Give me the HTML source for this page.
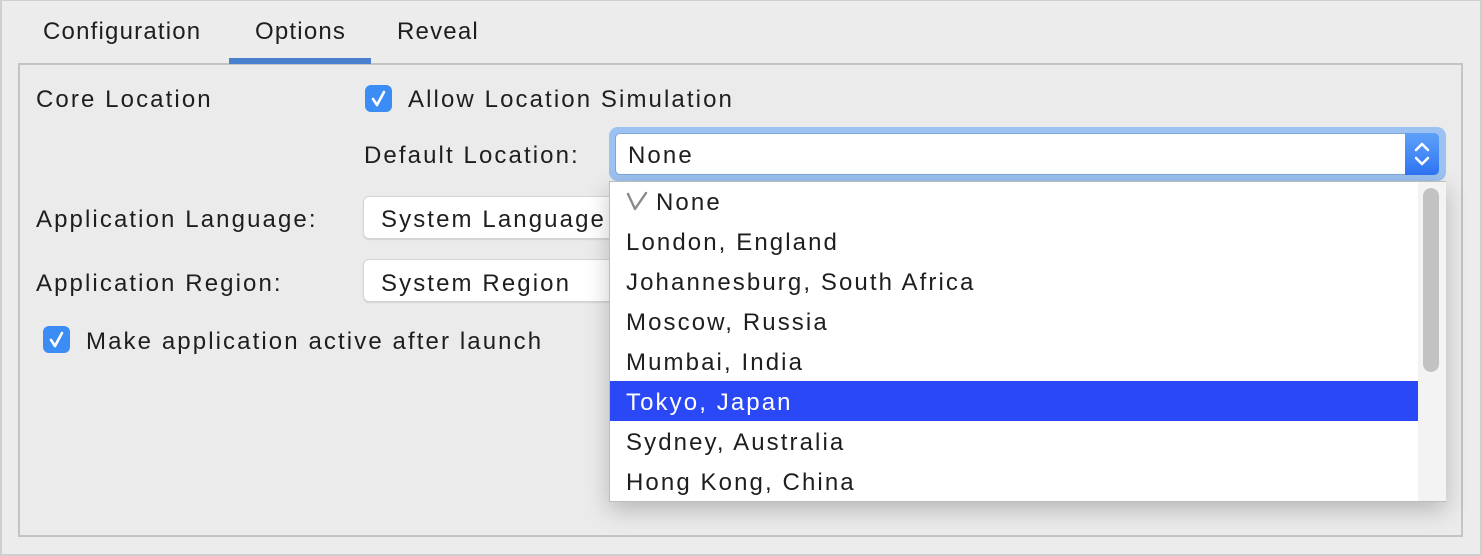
<!DOCTYPE html>
<html><head><style>
*{margin:0;padding:0;box-sizing:border-box}
body{width:1482px;height:556px;background:#ececec;font-family:"Liberation Sans",sans-serif;font-size:24px;letter-spacing:2.1px;color:#1e1e1e;position:relative;overflow:hidden}
.a{position:absolute;white-space:nowrap}
.t{letter-spacing:1.2px}
.outer{position:absolute;left:0;top:0;width:1482px;height:556px;border:2px solid #cfcfcf;border-top:1px solid #cfcfcf}
.panel{position:absolute;left:18px;top:63px;width:1445px;height:474px;border:2px solid #c4c4c4;background:#ebebeb}
.cb{position:absolute;width:27px;height:27px;border-radius:6px;background:#3b8cf5}
.cb svg{position:absolute;left:0;top:0}
.pop{position:absolute;background:#fff;border:1px solid #d4d4d4;border-radius:6px;box-shadow:0 1px 1px rgba(0,0,0,.1)}
.list{position:absolute;left:609px;top:181px;width:837px;height:321px;background:#fff;border:1px solid #bdbdbd;box-shadow:0 8px 22px rgba(0,0,0,.22)}
.item{position:absolute;left:16px;height:40px;line-height:42px}
</style></head><body>
<div class="outer"></div>
<div class="a t" style="left:43px;top:18px">Configuration</div>
<div class="a t" style="left:255px;top:18px">Options</div>
<div class="a t" style="left:397px;top:18px">Reveal</div>
<div class="panel"></div>
<div class="a" style="left:229px;top:58px;width:142px;height:6px;background:#4a80d0"></div>
<div class="a" style="left:36px;top:86px">Core Location</div>
<div class="cb" style="left:365px;top:85px"><svg width="27" height="27"><path d="M8 14 L12 20 L19 7" stroke="#fff" stroke-width="2.6" fill="none" stroke-linecap="round" stroke-linejoin="round"/></svg></div>
<div class="a" style="left:408px;top:86px">Allow Location Simulation</div>
<div class="a" style="left:364px;top:142px">Default Location:</div>
<div class="a" style="left:609px;top:127px;width:837px;height:54px;border-radius:9px;background:#9cc2f1"></div>
<div class="a" style="left:615px;top:133px;width:824px;height:42px;background:#fff;border-radius:5px;border:1px solid #7ea6dc"></div>
<div class="a" style="left:1405px;top:133px;width:34px;height:42px;background:linear-gradient(#5ea1f8,#2f74f4);border-radius:0 5px 5px 0"><svg width="34" height="42"><path d="M11 17 L17 11 L23 17 M11 25 L17 31 L23 25" stroke="#fff" stroke-width="2.5" fill="none" stroke-linecap="round" stroke-linejoin="round"/></svg></div>
<div class="a" style="left:628px;top:142px">None</div>
<div class="a" style="left:36px;top:206px">Application Language:</div>
<div class="pop" style="left:363px;top:196px;width:260px;height:43px"></div>
<div class="a" style="left:381px;top:206px">System Language</div>
<div class="a" style="left:36px;top:270px">Application Region:</div>
<div class="pop" style="left:363px;top:259px;width:260px;height:43px"></div>
<div class="a" style="left:381px;top:270px">System Region</div>
<div class="cb" style="left:43px;top:326px"><svg width="27" height="27"><path d="M8 14 L12 20 L19 7" stroke="#fff" stroke-width="2.6" fill="none" stroke-linecap="round" stroke-linejoin="round"/></svg></div>
<div class="a" style="left:86px;top:328px">Make application active after launch</div>
<div class="list">
 <div class="a" style="left:808px;top:0;width:28px;height:319px;background:#f3f3f3"></div>
 <div class="a" style="left:813px;top:6px;width:16px;height:184px;border-radius:8px;background:#c2c2c2"></div>
 <div class="a" style="left:0;top:199px;width:808px;height:40px;background:#2a48f6"></div>
 <div class="item" style="top:0"><svg width="22" height="22" style="position:relative;top:2px;margin-right:8px"><path d="M2 4 L9 19 L20 3" stroke="#8a8a8a" stroke-width="2.4" fill="none" stroke-linecap="round" stroke-linejoin="round"/></svg>None</div>
 <div class="item" style="top:40px">London, England</div>
 <div class="item" style="top:80px">Johannesburg, South Africa</div>
 <div class="item" style="top:120px">Moscow, Russia</div>
 <div class="item" style="top:160px">Mumbai, India</div>
 <div class="item" style="top:200px;color:#fff">Tokyo, Japan</div>
 <div class="item" style="top:240px">Sydney, Australia</div>
 <div class="item" style="top:280px">Hong Kong, China</div>
</div>
</body></html>
